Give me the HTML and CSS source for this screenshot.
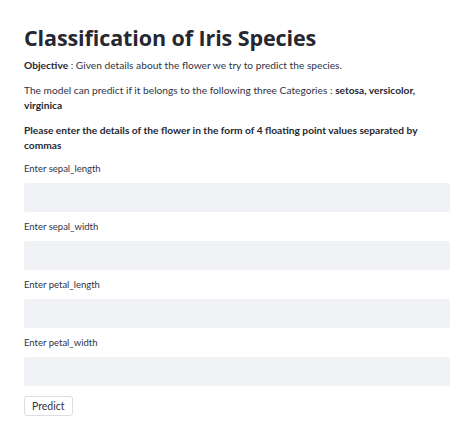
FILE: index.html
```html
<!DOCTYPE html>
<html>
<head>
<meta charset="utf-8">
<link rel="stylesheet" href="styles.css">
</head>
<body>
<main class="app">
  <h1 class="title">Classification of Iris Species</h1>
  <p class="para"><strong>Objective</strong> : Given details about the flower we try to predict the species.</p>
  <p class="para">The model can predict if it belongs to the following three Categories : <strong>setosa, versicolor,</strong> <strong>virginica</strong></p>
  <p class="para strong-para">Please enter the details of the flower in the form of 4 floating point values separated by commas</p>
  <div class="field">
    <label class="label">Enter sepal_length</label>
    <div class="input"></div>
  </div>
  <div class="field">
    <label class="label">Enter sepal_width</label>
    <div class="input"></div>
  </div>
  <div class="field">
    <label class="label">Enter petal_length</label>
    <div class="input"></div>
  </div>
  <div class="field">
    <label class="label">Enter petal_width</label>
    <div class="input"></div>
  </div>
  <button class="btn">Predict</button>
</main>
</body>
</html>
```

FILE: styles.css
```css
html, body {
  margin: 0;
  padding: 0;
  background: #ffffff;
}
body {
  font-family: "Lato", "Open Sans", sans-serif;
  color: #31333f;
}
.app {
  padding: 25px 24px 0 24px;
  width: 426px;
  display: flex;
  flex-direction: column;
  align-items: flex-start;
}
.title {
  font-family: "Open Sans", sans-serif;
  font-size: 21.5px;
  font-weight: 700;
  line-height: 25px;
  margin: 0 0 8px 0;
  color: #262730;
  letter-spacing: -0.1px;
}
.para {
  font-size: 10.2px;
  line-height: 15px;
  margin: 0 0 10px 0;
}
.para strong { font-weight: 700; color: #262730; }
.strong-para {
  font-weight: 700;
  color: #262730;
  margin-bottom: 10px;
}
.field {
  width: 100%;
  display: flex;
  flex-direction: column;
  margin-bottom: 9px;
}
.label {
  font-size: 9.5px;
  line-height: 12px;
  color: #31333f;
  margin-bottom: 8px;
}
.input {
  width: 100%;
  height: 29px;
  background: #f0f2f6;
  border-radius: 2px;
}
.btn {
  margin-top: 1px;
  font-family: inherit;
  font-size: 10.5px;
  color: #31333f;
  background: #fff;
  border: 1px solid #dcdde2;
  border-radius: 3px;
  padding: 0 7px;
  height: 20px;
  line-height: 18px;
}
```
